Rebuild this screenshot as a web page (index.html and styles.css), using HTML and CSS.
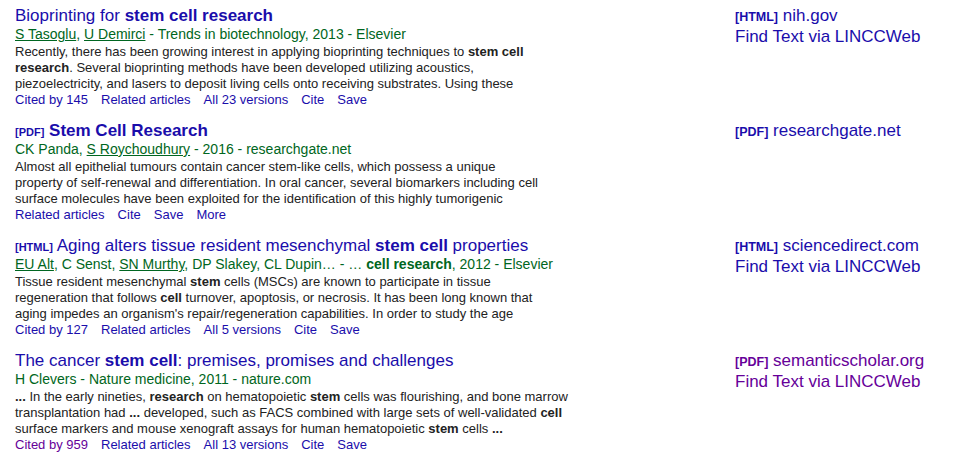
FILE: index.html
```html
<!DOCTYPE html>
<html>
<head>
<meta charset="utf-8">
<link rel="stylesheet" href="styles.css">
</head>
<body>
<div class="results">

  <div class="result">
    <div class="main">
      <h3 class="title"><a href="#">Bioprinting for <b>stem cell research</b></a></h3>
      <div class="authors"><a class="au" href="#">S Tasoglu</a>, <a class="au" href="#">U Demirci</a> - Trends in biotechnology, 2013 - Elsevier</div>
      <div class="snippet">Recently, there has been growing interest in applying bioprinting techniques to <b>stem cell</b><br><b>research</b>. Several bioprinting methods have been developed utilizing acoustics,<br>piezoelectricity, and lasers to deposit living cells onto receiving substrates. Using these</div>
      <div class="links"><a href="#">Cited by 145</a><a href="#">Related articles</a><a href="#">All 23 versions</a><a href="#">Cite</a><a href="#">Save</a></div>
    </div>
    <div class="side">
      <a href="#" class="sl"><span class="tag">[HTML]</span> nih.gov</a>
      <a href="#" class="sl">Find Text via LINCCWeb</a>
    </div>
  </div>

  <div class="result">
    <div class="main">
      <h3 class="title"><span class="tag">[PDF]</span> <a href="#"><b>Stem Cell Research</b></a></h3>
      <div class="authors">CK Panda, <a class="au" href="#">S Roychoudhury</a> - 2016 - researchgate.net</div>
      <div class="snippet">Almost all epithelial tumours contain cancer stem-like cells, which possess a unique<br>property of self-renewal and differentiation. In oral cancer, several biomarkers including cell<br>surface molecules have been exploited for the identification of this highly tumorigenic</div>
      <div class="links"><a href="#">Related articles</a><a href="#">Cite</a><a href="#">Save</a><a href="#">More</a></div>
    </div>
    <div class="side">
      <a href="#" class="sl"><span class="tag">[PDF]</span> researchgate.net</a>
    </div>
  </div>

  <div class="result">
    <div class="main">
      <h3 class="title"><span class="tag">[HTML]</span> <a href="#">Aging alters tissue resident mesenchymal <b>stem cell</b> properties</a></h3>
      <div class="authors"><a class="au" href="#">EU Alt</a>, C Senst, <a class="au" href="#">SN Murthy</a>, DP Slakey, CL Dupin… - … <b>cell research</b>, 2012 - Elsevier</div>
      <div class="snippet">Tissue resident mesenchymal <b>stem</b> cells (MSCs) are known to participate in tissue<br>regeneration that follows <b>cell</b> turnover, apoptosis, or necrosis. It has been long known that<br>aging impedes an organism's repair/regeneration capabilities. In order to study the age</div>
      <div class="links"><a href="#">Cited by 127</a><a href="#">Related articles</a><a href="#">All 5 versions</a><a href="#">Cite</a><a href="#">Save</a></div>
    </div>
    <div class="side">
      <a href="#" class="sl"><span class="tag">[HTML]</span> sciencedirect.com</a>
      <a href="#" class="sl">Find Text via LINCCWeb</a>
    </div>
  </div>

  <div class="result">
    <div class="main">
      <h3 class="title"><a href="#">The cancer <b>stem cell</b>: premises, promises and challenges</a></h3>
      <div class="authors">H Clevers - Nature medicine, 2011 - nature.com</div>
      <div class="snippet"><b>...</b> In the early nineties, <b>research</b> on hematopoietic <b>stem</b> cells was flourishing, and bone marrow<br>transplantation had <b>...</b> developed, such as FACS combined with large sets of well-validated <b>cell</b><br>surface markers and mouse xenograft assays for human hematopoietic <b>stem</b> cells <b>...</b></div>
      <div class="links"><a href="#" class="visited">Cited by 959</a><a href="#">Related articles</a><a href="#">All 13 versions</a><a href="#">Cite</a><a href="#">Save</a></div>
    </div>
    <div class="side visited-side">
      <a href="#" class="sl"><span class="tag">[PDF]</span> semanticscholar.org</a>
      <a href="#" class="sl">Find Text via LINCCWeb</a>
    </div>
  </div>

</div>
</body>
</html>
```

FILE: styles.css
```css
html, body {
  margin: 0;
  padding: 0;
  background: #fff;
}
body {
  font-family: "Liberation Sans", Arial, sans-serif;
  color: #222;
}
a {
  text-decoration: none;
  color: #1a0dab;
}
.results {
  padding: 6px 0 0 15px;
}
.result {
  display: grid;
  grid-template-columns: 720px 1fr;
  margin-bottom: 13px;
}
.title {
  margin: 0;
  font-size: 17px;
  font-weight: normal;
  line-height: 20px;
  height: 20px;
  white-space: nowrap;
}
.title .tag {
  color: #1a0dab;
  font-size: 11px;
}
.tag {
  font-size: 12.5px;
  font-weight: bold;
}
.authors {
  font-size: 14px;
  line-height: 16px;
  color: #006621;
  white-space: nowrap;
}
.authors .au {
  color: #006621;
  text-decoration: underline;
}
.snippet {
  margin-top: 2px;
  font-size: 13px;
  line-height: 16px;
  color: #222;
  white-space: nowrap;
}
.links {
  font-size: 13px;
  line-height: 16px;
  display: flex;
  gap: 13px;
  white-space: nowrap;
}
.links .visited {
  color: #660099;
}
.side {
  display: flex;
  flex-direction: column;
  align-items: flex-start;
  font-size: 17px;
  line-height: 20px;
}
.side .sl {
  color: #1a0dab;
  white-space: nowrap;
}
.visited-side .sl {
  color: #660099;
}
```
